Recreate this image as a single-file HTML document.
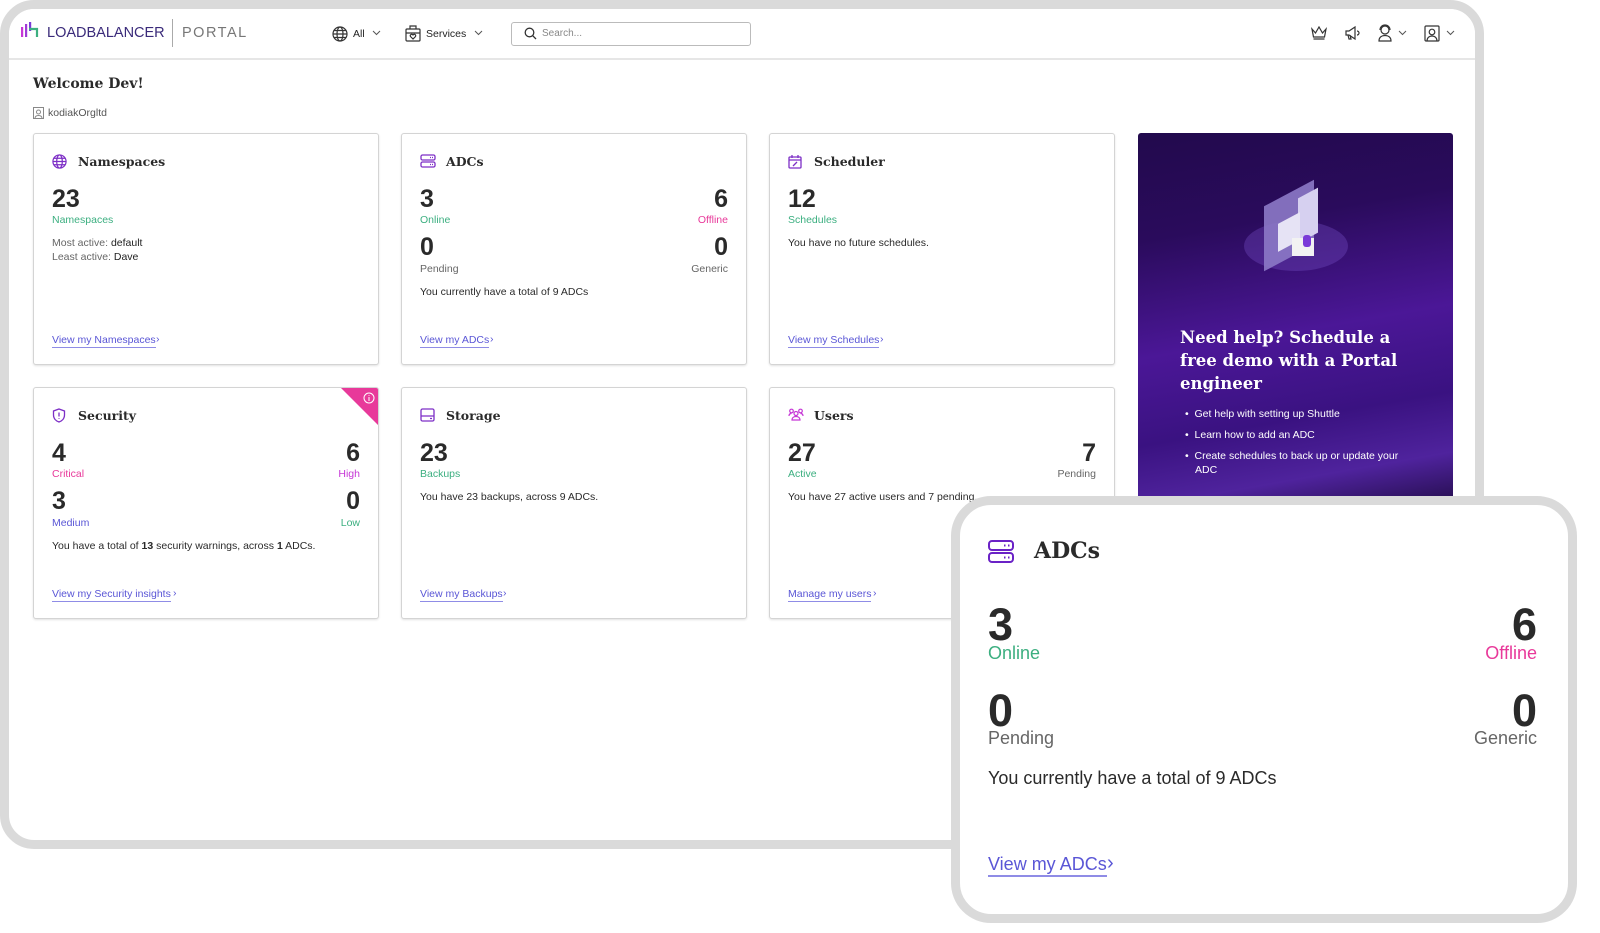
<!DOCTYPE html>
<html><head><meta charset="utf-8">
<style>
*{box-sizing:border-box;margin:0;padding:0}
body{width:1600px;height:933px;background:#fff;position:relative;overflow:hidden;font-family:"Liberation Sans",Arial,sans-serif;color:#222}
.abs{position:absolute}
.frame{position:absolute;left:0;top:0;width:1484px;height:849px;border:9px solid #dadada;border-radius:34px;background:#fff;overflow:hidden}
.hdr{position:absolute;left:0;top:0;right:0;height:51px;border-bottom:2px solid #e6e6e6;background:#fff}
.serif{font-family:"DejaVu Serif","Liberation Serif",serif;font-weight:bold}
.card{position:absolute;width:346px;height:232px;border:1px solid #d4d4d4;border-radius:3px;background:#fff;box-shadow:0 1px 2px rgba(0,0,0,.12);overflow:hidden}
.card .t{position:absolute;left:44px;top:20px;font-size:12.5px;color:#2a2a2a}
.card .ic{position:absolute;left:18px;top:20px}
.num{position:absolute;font-size:25px;font-weight:bold;color:#2a2a2a;line-height:1}
.lbl{position:absolute;font-size:10.5px;line-height:1}
.txt{position:absolute;font-size:10.5px;color:#2a2a2a;line-height:1}
.lnk{position:absolute;font-size:10.5px;color:#5a56d6;line-height:1;border-bottom:1.5px solid #8f8ce6;padding-bottom:1px}
.g{color:#3caf80}.p{color:#e8399a}.gr{color:#666}.m{color:#c637d6}.b{color:#5a56d6}
.r{right:18px;text-align:right}
</style></head><body>
<div class="frame">
 <div class="hdr">
  <svg class="abs" style="left:12px;top:13px" width="20" height="16" viewBox="0 0 20 16"><rect x="0" y="5" width="2.2" height="10" fill="#c637d6"/><rect x="4" y="2" width="2.2" height="13" fill="#a03ad8"/><rect x="8" y="0" width="2.2" height="9" fill="#7a3ad8"/><path d="M8 7h8v8" stroke="#3caf80" stroke-width="2.2" fill="none"/></svg>
  <div class="abs" style="left:38px;top:16px;font-size:14.5px;color:#3a2a7a">LOADBALANCER</div>
  <div class="abs" style="left:163px;top:10px;width:1px;height:28px;background:#aaa"></div>
  <div class="abs" style="left:173px;top:16px;font-size:14.5px;color:#777;letter-spacing:1.5px">PORTAL</div>
  <svg class="abs" style="left:323px;top:17px" width="16" height="16" viewBox="0 0 16 16" fill="none" stroke="#333" stroke-width="1.2"><circle cx="8" cy="8" r="7"/><ellipse cx="8" cy="8" rx="3" ry="7"/><path d="M1 8h14M2 4.5h12M2 11.5h12"/></svg>
  <div class="abs" style="left:344px;top:19px;font-size:10.5px">All</div>
  <svg class="abs" style="left:363px;top:21px" width="9" height="6" viewBox="0 0 9 6"><path d="M1 1l3.5 3.5L8 1" stroke="#555" fill="none"/></svg>
  <svg class="abs" style="left:396px;top:16px" width="16" height="17" viewBox="0 0 16 17" fill="none" stroke="#333" stroke-width="1.2"><rect x="1" y="4" width="14" height="12" rx="1"/><path d="M1 8h14M5 4V1h6v3"/><path d="M8 14l-2.5-2.5a1.3 1.3 0 0 1 2.5-1.5a1.3 1.3 0 0 1 2.5 1.5z"/></svg>
  <div class="abs" style="left:417px;top:19px;font-size:10.5px">Services</div>
  <svg class="abs" style="left:465px;top:21px" width="9" height="6" viewBox="0 0 9 6"><path d="M1 1l3.5 3.5L8 1" stroke="#555" fill="none"/></svg>
  <div class="abs" style="left:502px;top:13px;width:240px;height:24px;border:1px solid #bbb;border-radius:3px"></div>
  <svg class="abs" style="left:515px;top:18px" width="13" height="13" viewBox="0 0 13 13" fill="none" stroke="#333" stroke-width="1.3"><circle cx="5.5" cy="5.5" r="4.3"/><path d="M8.6 8.6L12 12"/></svg>
  <div class="abs" style="left:533px;top:19px;font-size:10px;color:#888">Search...</div>
  <svg class="abs" style="left:1302px;top:17px" width="16" height="14" viewBox="0 0 16 14" fill="none" stroke="#333" stroke-width="1.2"><path d="M1 3l3.5 4L8 1l3.5 6L15 3l-1.5 8h-11z"/><path d="M2.5 13h11"/></svg>
  <svg class="abs" style="left:1335px;top:16px" width="17" height="16" viewBox="0 0 17 16" fill="none" stroke="#333" stroke-width="1.2"><path d="M2 6h3l6-4v12l-6-4H2z"/><path d="M4 10l1 4h2l-1-4M13 6a2 2 0 0 1 0 4"/></svg>
  <svg class="abs" style="left:1368px;top:15px" width="16" height="18" viewBox="0 0 16 18" fill="none" stroke="#333" stroke-width="1.2"><circle cx="8" cy="6" r="4"/><path d="M3 6a5 5 0 0 1 10 0M2 17c0-4 3-5.5 6-5.5s6 1.5 6 5.5z"/></svg>
  <svg class="abs" style="left:1389px;top:21px" width="9" height="6" viewBox="0 0 9 6"><path d="M1 1l3.5 3.5L8 1" stroke="#555" fill="none"/></svg>
  <svg class="abs" style="left:1415px;top:16px" width="16" height="17" viewBox="0 0 16 17" fill="none" stroke="#333" stroke-width="1.2"><rect x="1" y="1" width="14" height="15" rx="1"/><circle cx="8" cy="7" r="2.8"/><path d="M3 16c0-3.5 2.5-5 5-5s5 1.5 5 5"/></svg>
  <svg class="abs" style="left:1437px;top:21px" width="9" height="6" viewBox="0 0 9 6"><path d="M1 1l3.5 3.5L8 1" stroke="#555" fill="none"/></svg>
 </div>
 <div class="abs serif" style="left:24px;top:67px;font-size:14px;color:#2a2a2a">Welcome Dev!</div>
 <svg class="abs" style="left:24px;top:98px" width="11" height="12" viewBox="0 0 11 12" fill="none" stroke="#888"><rect x=".5" y=".5" width="10" height="11"/><circle cx="5.5" cy="5" r="2"/><path d="M2 11.5c0-2 1.5-3 3.5-3s3.5 1 3.5 3"/></svg>
 <div class="abs" style="left:39px;top:98px;font-size:10.5px;color:#555">kodiakOrgltd</div>

 <div class="card" style="left:24px;top:124px">
  <svg class="ic" width="15" height="15" viewBox="0 0 16 16" fill="none" stroke="#7d2fc6" stroke-width="1.3"><circle cx="8" cy="8" r="7"/><ellipse cx="8" cy="8" rx="3" ry="7"/><path d="M1 8h14M2 4.5h12M2 11.5h12"/></svg>
  <div class="t serif">Namespaces</div>
  <div class="num" style="left:18px;top:53px">23</div>
  <div class="lbl g" style="left:18px;top:81px">Namespaces</div>
  <div class="txt gr" style="left:18px;top:104px">Most active: <span style="color:#222">default</span></div>
  <div class="txt gr" style="left:18px;top:118px">Least active: <span style="color:#222">Dave</span></div>
  <div class="lnk" style="left:18px;top:201px">View my Namespaces</div><div class="txt b" style="left:122px;top:200px">›</div>
 </div>
 <div class="card" style="left:392px;top:124px">
  <svg class="ic" width="16" height="14" viewBox="0 0 16 14" fill="none" stroke="#7d2fc6" stroke-width="1.3"><rect x="1" y="1" width="14" height="5" rx="1.5"/><rect x="1" y="8" width="14" height="5" rx="1.5"/><path d="M10 3.5h1M12 3.5h1M10 10.5h1M12 10.5h1"/></svg>
  <div class="t serif">ADCs</div>
  <div class="num" style="left:18px;top:53px">3</div><div class="num r" style="top:53px">6</div>
  <div class="lbl g" style="left:18px;top:81px">Online</div><div class="lbl p r" style="top:81px">Offline</div>
  <div class="num" style="left:18px;top:101px">0</div><div class="num r" style="top:101px">0</div>
  <div class="lbl gr" style="left:18px;top:130px">Pending</div><div class="lbl gr r" style="top:130px">Generic</div>
  <div class="txt" style="left:18px;top:153px">You currently have a total of 9 ADCs</div>
  <div class="lnk" style="left:18px;top:201px">View my ADCs</div><div class="txt b" style="left:88px;top:200px">›</div>
 </div>
 <div class="card" style="left:760px;top:124px">
  <svg class="ic" width="14" height="15" viewBox="0 0 14 15" fill="none" stroke="#7d2fc6" stroke-width="1.3"><rect x="1" y="3" width="12" height="11" rx="1"/><path d="M4 1v3M10 1v3M1 6h12M5 12l4-4"/></svg>
  <div class="t serif">Scheduler</div>
  <div class="num" style="left:18px;top:53px">12</div>
  <div class="lbl g" style="left:18px;top:81px">Schedules</div>
  <div class="txt" style="left:18px;top:104px">You have no future schedules.</div>
  <div class="lnk" style="left:18px;top:201px">View my Schedules</div><div class="txt b" style="left:110px;top:200px">›</div>
 </div>
 <div class="card" style="left:24px;top:378px">
  <div class="abs" style="right:0;top:0;width:0;height:0;border-top:37px solid #e8399a;border-left:37px solid transparent"></div>
  <svg class="abs" style="right:3px;top:4px" width="12" height="12" viewBox="0 0 12 12" fill="none" stroke="#fff"><circle cx="6" cy="6" r="5"/><path d="M6 5v4M6 3v.8"/></svg>
  <svg class="ic" width="14" height="15" viewBox="0 0 14 15" fill="none" stroke="#7d2fc6" stroke-width="1.3"><path d="M7 1l5.5 2v4c0 3.5-2.5 6-5.5 7c-3-1-5.5-3.5-5.5-7V3z"/><path d="M7 4.5v4M7 10v.8"/></svg>
  <div class="t serif">Security</div>
  <div class="num" style="left:18px;top:53px">4</div><div class="num r" style="top:53px">6</div>
  <div class="lbl p" style="left:18px;top:81px">Critical</div><div class="lbl m r" style="top:81px">High</div>
  <div class="num" style="left:18px;top:101px">3</div><div class="num r" style="top:101px">0</div>
  <div class="lbl b" style="left:18px;top:130px">Medium</div><div class="lbl g r" style="top:130px">Low</div>
  <div class="txt" style="left:18px;top:153px">You have a total of <b>13</b> security warnings, across <b>1</b> ADCs.</div>
  <div class="lnk" style="left:18px;top:201px">View my Security insights</div><div class="txt b" style="left:139px;top:200px">›</div>
 </div>
 <div class="card" style="left:392px;top:378px">
  <svg class="ic" width="15" height="14" viewBox="0 0 15 14" fill="none" stroke="#7d2fc6" stroke-width="1.3"><rect x="1" y="1" width="13" height="12" rx="1.5"/><path d="M1 8h13M10 10.5h2"/></svg>
  <div class="t serif">Storage</div>
  <div class="num" style="left:18px;top:53px">23</div>
  <div class="lbl g" style="left:18px;top:81px">Backups</div>
  <div class="txt" style="left:18px;top:104px">You have 23 backups, across 9 ADCs.</div>
  <div class="lnk" style="left:18px;top:201px">View my Backups</div><div class="txt b" style="left:101px;top:200px">›</div>
 </div>
 <div class="card" style="left:760px;top:378px">
  <svg class="ic" width="16" height="13" viewBox="0 0 16 13" fill="none" stroke="#c637d6" stroke-width="1.2"><circle cx="3.5" cy="3" r="1.8"/><circle cx="12.5" cy="3" r="1.8"/><circle cx="8" cy="5.5" r="2"/><path d="M4 12c0-2.5 2-3.5 4-3.5s4 1 4 3.5zM1 8c0-2 1-2.5 2.5-2.5M15 8c0-2-1-2.5-2.5-2.5"/></svg>
  <div class="t serif">Users</div>
  <div class="num" style="left:18px;top:53px">27</div><div class="num r" style="top:53px">7</div>
  <div class="lbl g" style="left:18px;top:81px">Active</div><div class="lbl gr r" style="top:81px">Pending</div>
  <div class="txt" style="left:18px;top:104px">You have 27 active users and 7 pending.</div>
  <div class="lnk" style="left:18px;top:201px">Manage my users</div><div class="txt b" style="left:103px;top:200px">›</div>
 </div>
 <div class="abs" style="left:1129px;top:124px;width:315px;height:380px;border-radius:3px;background:linear-gradient(170deg,#220a4d 0%,#2a0b5c 25%,#4b1797 52%,#3a1281 72%,#4f239d 86%,#1e0a40 100%)">
  <div class="abs" style="left:106px;top:88px;width:104px;height:50px;border-radius:50%;background:rgba(120,80,200,.35)"></div>
  <div class="abs" style="left:126px;top:60px;width:50px;height:65px;background:#8c79c6;transform:skewY(-28deg);opacity:.9"></div>
  <div class="abs" style="left:160px;top:60px;width:20px;height:45px;background:#d6d0f0;transform:skewY(-28deg)"></div>
  <div class="abs" style="left:140px;top:85px;width:22px;height:28px;background:#e6e3f5;transform:skewY(-28deg)"></div>
  <div class="abs" style="left:154px;top:105px;width:22px;height:18px;background:#f2f2f2"></div>
  <div class="abs" style="left:165px;top:102px;width:8px;height:12px;background:#7a3ad8;border-radius:3px"></div>
  <div class="abs serif" style="left:42px;top:193px;width:240px;font-size:16.5px;line-height:23px;color:#fff">Need help? Schedule a free demo with a Portal engineer</div>
  <div class="abs" style="left:47px;top:274px;width:215px;font-size:10.5px;color:#fff;line-height:14px">
   <div style="margin-bottom:7px">•&nbsp; Get help with setting up Shuttle</div>
   <div style="margin-bottom:7px">•&nbsp; Learn how to add an ADC</div>
   <div style="padding-left:10px;text-indent:-10px">•&nbsp; Create schedules to back up or update your ADC</div>
  </div>
 </div>
</div>

<div class="abs" style="left:951px;top:496px;width:626px;height:427px;border:9px solid #dadada;border-radius:40px;background:#fff">
 <svg class="abs" style="left:28px;top:35px" width="26" height="24" viewBox="0 0 26 24" fill="none" stroke="#6a22c6" stroke-width="2"><rect x="1" y="1" width="24" height="9" rx="3"/><rect x="1" y="13" width="24" height="9" rx="3"/><path d="M16 5.5h1.5M20 5.5h1.5M16 17.5h1.5M20 17.5h1.5"/></svg>
 <div class="abs serif" style="left:74px;top:33px;font-size:22px;color:#2a2a2a">ADCs</div>
 <div class="abs" style="left:28px;top:97px;font-size:45px;font-weight:bold;color:#2a2a2a;line-height:1">3</div>
 <div class="abs" style="right:31px;top:97px;font-size:45px;font-weight:bold;color:#2a2a2a;line-height:1">6</div>
 <div class="abs g" style="left:28px;top:139px;font-size:18px;line-height:1">Online</div>
 <div class="abs p" style="right:31px;top:139px;font-size:18px;line-height:1">Offline</div>
 <div class="abs" style="left:28px;top:183px;font-size:45px;font-weight:bold;color:#2a2a2a;line-height:1">0</div>
 <div class="abs" style="right:31px;top:183px;font-size:45px;font-weight:bold;color:#2a2a2a;line-height:1">0</div>
 <div class="abs gr" style="left:28px;top:224px;font-size:18px;line-height:1">Pending</div>
 <div class="abs gr" style="right:31px;top:224px;font-size:18px;line-height:1">Generic</div>
 <div class="abs" style="left:28px;top:264px;font-size:18px;line-height:1;color:#2a2a2a">You currently have a total of 9 ADCs</div>
 <div class="abs" style="left:28px;top:350px;font-size:18px;line-height:1;color:#5a56d6;border-bottom:2px solid #8f8ce6;padding-bottom:2px">View my ADCs</div>
 <div class="abs b" style="left:147px;top:348px;font-size:20px;line-height:1">›</div>
</div>
</body></html>
